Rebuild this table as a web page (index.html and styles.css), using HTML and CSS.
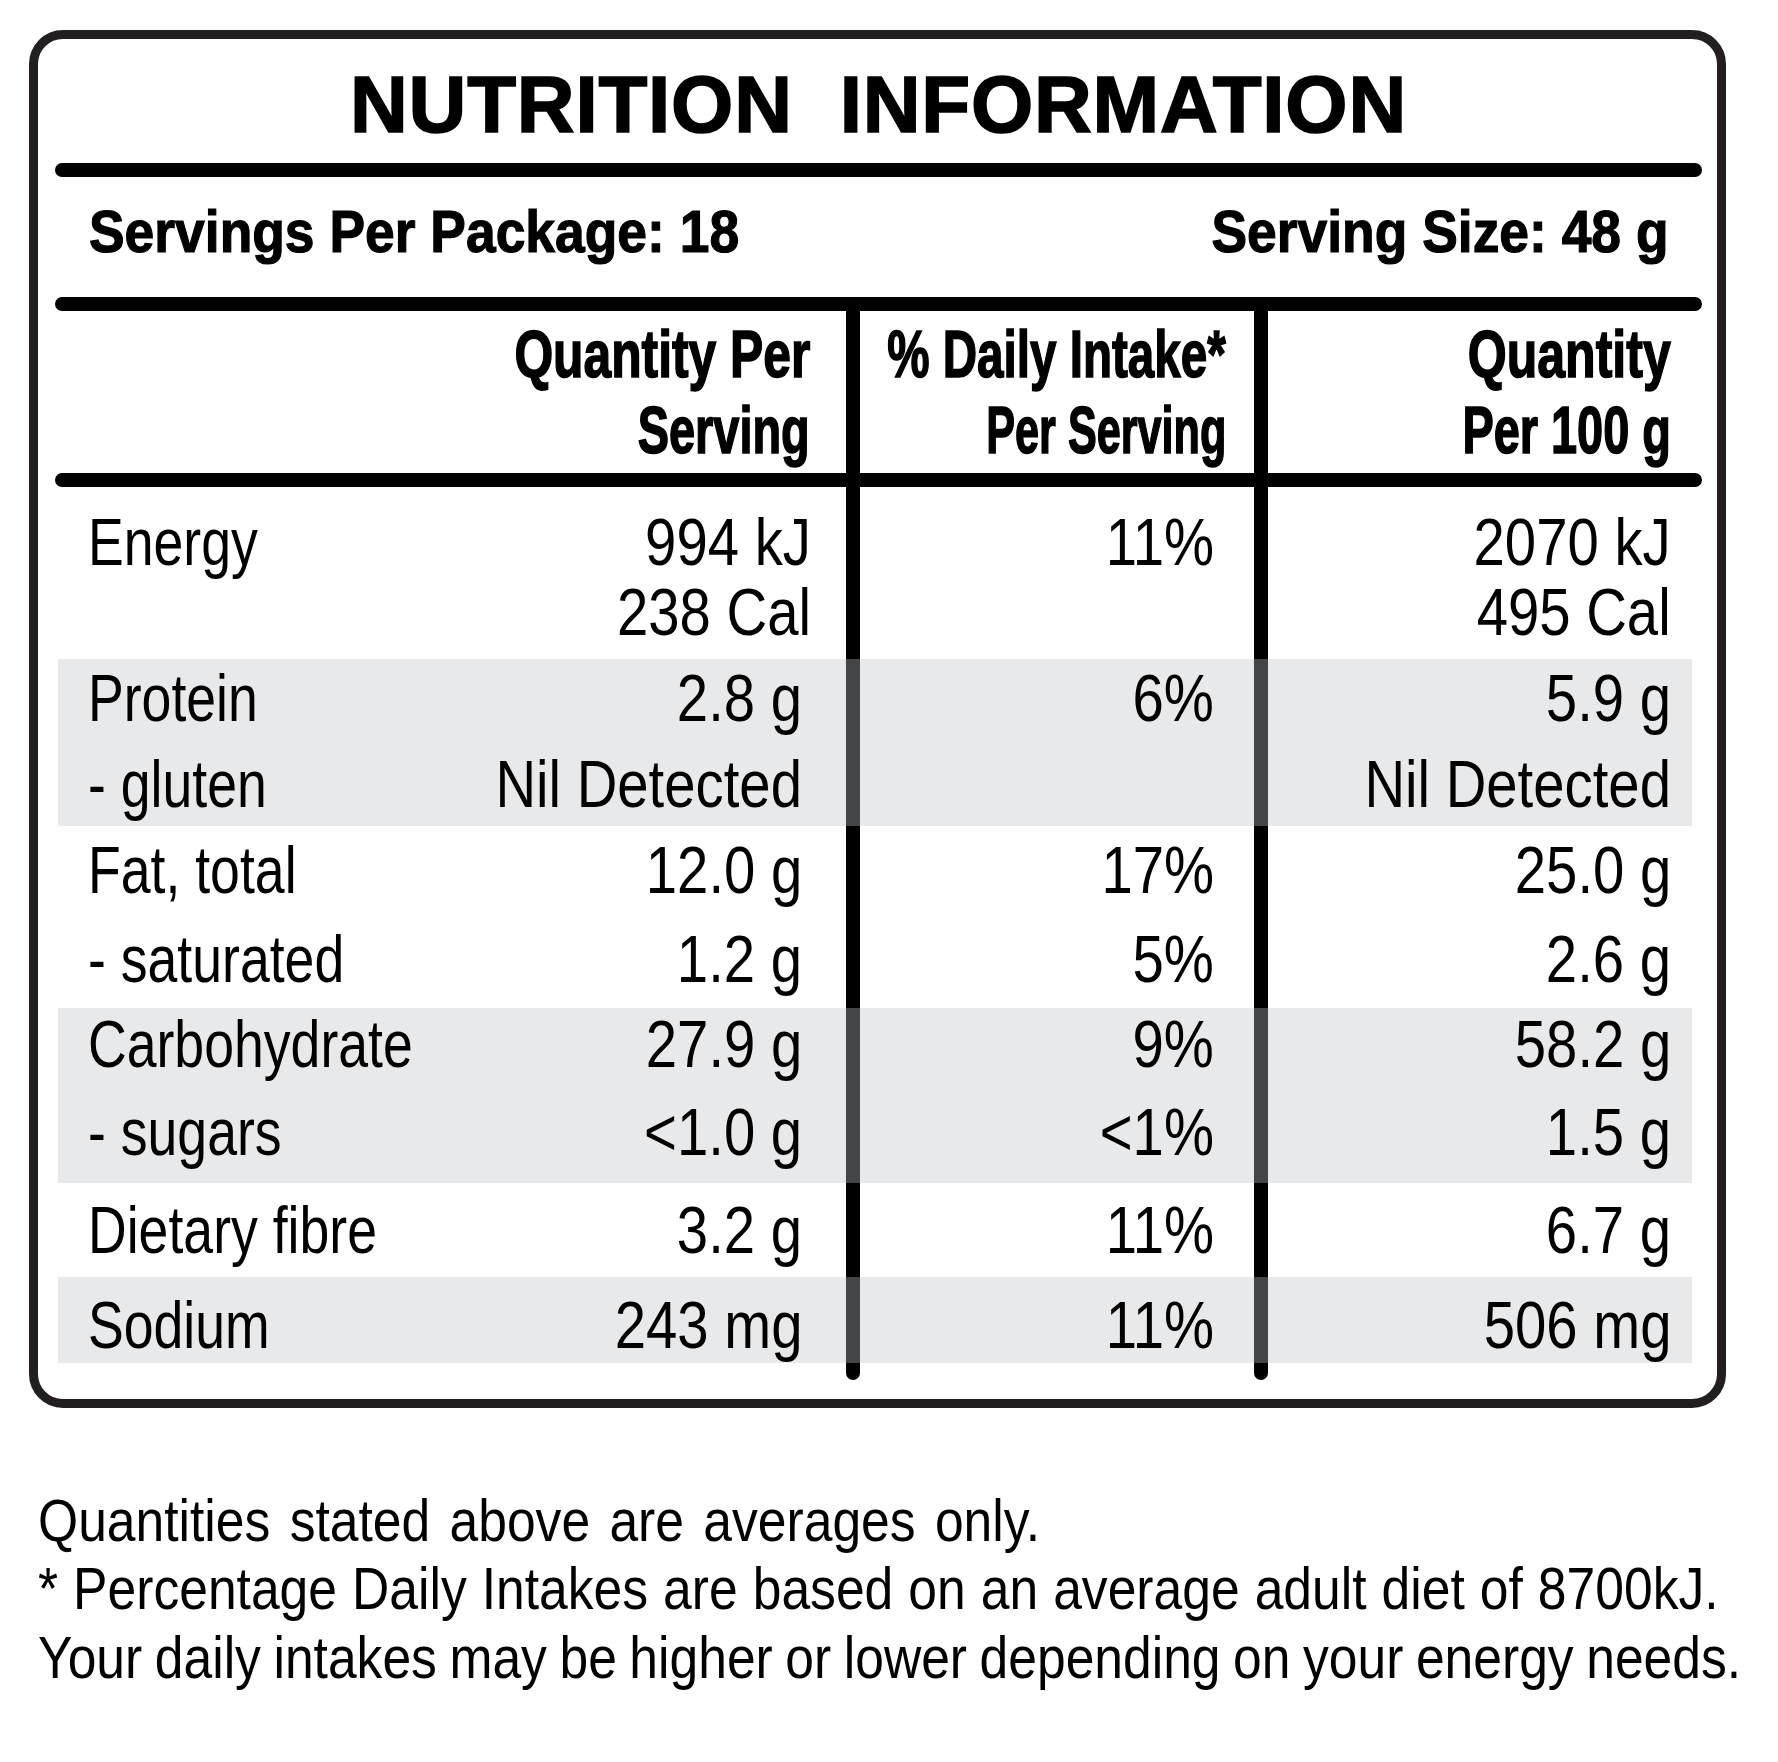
FILE: index.html
```html
<!DOCTYPE html>
<html lang="en">
<head>
<meta charset="utf-8">
<title>Nutrition Information</title>
<link rel="stylesheet" href="styles.css">
</head>
<body>
<div class="label">
  <h1 class="title">NUTRITION INFORMATION</h1>
  <div class="rule rule-top"></div>
  <div class="servings">
    <span class="sx">Servings Per Package: 18</span>
    <span class="sx r">Serving Size: 48 g</span>
  </div>
  <div class="rule"></div>
  <div class="grid">
    <div class="divider dv1"></div>
    <div class="divider dv2"></div>
    <div class="rule rule3"></div>
    <div class="band band1"></div>
    <div class="band band2"></div>
    <div class="band band3"></div>

    <div class="hd hd1"><span class="hl k74">Quantity Per</span><span class="hl k70">Serving</span></div>
    <div class="hd hd2"><span class="hl k71">% Daily Intake*</span><span class="hl k645">Per Serving</span></div>
    <div class="hd hd3"><span class="hl k75">Quantity</span><span class="hl k70">Per 100 g</span></div>

    <div class="cell lab r3"><span class="nm">Energy</span><span class="v ve">994 kJ<br>238 Cal</span></div>
    <div class="cell pct r3"><span class="v">11%</span></div>
    <div class="cell per r3"><span class="v">2070 kJ<br>495 Cal</span></div>

    <div class="cell lab r4"><span class="nm">Protein</span><span class="v">2.8 g</span></div>
    <div class="cell pct r4"><span class="v">6%</span></div>
    <div class="cell per r4"><span class="v">5.9 g</span></div>

    <div class="cell lab r5"><span class="nm">- gluten</span><span class="v">Nil Detected</span></div>
    <div class="cell per r5"><span class="v">Nil Detected</span></div>

    <div class="cell lab r6"><span class="nm">Fat, total</span><span class="v">12.0 g</span></div>
    <div class="cell pct r6"><span class="v">17%</span></div>
    <div class="cell per r6"><span class="v">25.0 g</span></div>

    <div class="cell lab r7"><span class="nm">- saturated</span><span class="v">1.2 g</span></div>
    <div class="cell pct r7"><span class="v">5%</span></div>
    <div class="cell per r7"><span class="v">2.6 g</span></div>

    <div class="cell lab r8"><span class="nm">Carbohydrate</span><span class="v">27.9 g</span></div>
    <div class="cell pct r8"><span class="v">9%</span></div>
    <div class="cell per r8"><span class="v">58.2 g</span></div>

    <div class="cell lab r9"><span class="nm">- sugars</span><span class="v">&lt;1.0 g</span></div>
    <div class="cell pct r9"><span class="v">&lt;1%</span></div>
    <div class="cell per r9"><span class="v">1.5 g</span></div>

    <div class="cell lab r10"><span class="nm">Dietary fibre</span><span class="v">3.2 g</span></div>
    <div class="cell pct r10"><span class="v">11%</span></div>
    <div class="cell per r10"><span class="v">6.7 g</span></div>

    <div class="cell lab r11"><span class="nm">Sodium</span><span class="v">243 mg</span></div>
    <div class="cell pct r11"><span class="v">11%</span></div>
    <div class="cell per r11"><span class="v">506 mg</span></div>
  </div>
</div>
<div class="notes">
  <p class="line n1">Quantities stated above are averages only.</p>
  <p class="line n2">* Percentage Daily Intakes are based on an average adult diet of 8700kJ.</p>
  <p class="line n3">Your daily intakes may be higher or lower depending on your energy needs.</p>
</div>
</body>
</html>
```

FILE: styles.css
```css
* {
  box-sizing: border-box;
  margin: 0;
  padding: 0;
}

html,
body {
  background: #fff;
}

body {
  font-family: "Liberation Sans", Arial, sans-serif;
  color: #000;
  padding-bottom: 40px;
}

.label {
  margin: 30px 0 0 29px;
  width: 1697px;
  border: 9px solid #231f20;
  border-radius: 34px;
  padding: 0 15px 0 17px;
}

.title {
  font-size: 80px;
  font-weight: 700;
  line-height: 100px;
  padding-top: 16px;
  text-align: center;
  word-spacing: 24px;
  letter-spacing: 0.8px;
  white-space: nowrap;
  -webkit-text-stroke: 1.6px #000;
}

.rule {
  height: 14px;
  background: #000;
  border-radius: 7px;
}

.rule-top {
  margin-top: 8px;
}

.servings {
  display: flex;
  justify-content: space-between;
  padding: 20px 33px 30px 34px;
  font-size: 60px;
  font-weight: 700;
  line-height: 70px;
}

.sx {
  display: inline-block;
  white-space: nowrap;
  transform: scaleX(0.89);
  transform-origin: left center;
  -webkit-text-stroke: 1.2px #000;
}

.sx.r {
  transform-origin: right center;
}

.grid {
  display: grid;
  grid-template-columns: 791px 14px 394px 14px 434px;
  grid-template-rows: 162px 14px 172px 83px 84px 86px 96px 88px 87px 94px 86px 36px;
}

.divider {
  grid-row: 1 / -1;
  background: #000;
  margin-bottom: 19px;
  border-radius: 0 0 7px 7px;
}

.dv1 { grid-column: 2; }
.dv2 { grid-column: 4; }

.rule3 {
  grid-row: 2;
  grid-column: 1 / -1;
}

.band {
  grid-column: 1 / -1;
  margin: 0 10px 0 3px;
  background: rgba(190, 193, 199, 0.357);
}

.band1 { grid-row: 4 / 6; }
.band2 { grid-row: 8 / 10; }
.band3 { grid-row: 11; }

.hd {
  grid-row: 1;
  display: flex;
  flex-direction: column;
  align-items: flex-end;
  font-size: 67px;
  font-weight: 700;
  line-height: 76px;
  padding-top: 5px;
  white-space: nowrap;
}

.hd1 { grid-column: 1; padding-right: 36px; }
.hd2 { grid-column: 3; padding-right: 28px; }
.hd3 { grid-column: 5; padding-right: 31px; }

.hl {
  display: block;
  transform-origin: right top;
  -webkit-text-stroke: 1.6px #000;
}

.k645 { transform: scaleX(0.645); }
.k70 { transform: scaleX(0.7); }
.k71 { transform: scaleX(0.71); }
.k74 { transform: scaleX(0.743); }
.k75 { transform: scaleX(0.747); }

.cell {
  font-size: 67px;
  line-height: 70px;
  white-space: nowrap;
}

.lab {
  grid-column: 1;
  display: flex;
  justify-content: space-between;
  align-items: flex-start;
  padding-left: 33px;
  padding-right: 44px;
}

.pct,
.per {
  display: flex;
  justify-content: flex-end;
  align-items: flex-start;
}

.pct {
  grid-column: 3;
  padding-right: 40px;
}

.per {
  grid-column: 5;
  padding-right: 31px;
}

.nm {
  display: inline-block;
  transform: scaleX(0.8);
  transform-origin: left top;
}

.v {
  display: inline-block;
  text-align: right;
  transform: scaleX(0.84);
  transform-origin: right top;
}

.lab .ve {
  margin-right: -9px;
}

.r3 { grid-row: 3; padding-top: 20px; }
.r4 { grid-row: 4; padding-top: 4px; }
.r5 { grid-row: 5; padding-top: 7px; }
.r6 { grid-row: 6; padding-top: 9px; }
.r7 { grid-row: 7; padding-top: 12px; }
.r8 { grid-row: 8; padding-top: 1px; }
.r9 { grid-row: 9; padding-top: 1px; }
.r10 { grid-row: 10; padding-top: 12px; }
.r11 { grid-row: 11; padding-top: 13px; }

.notes {
  margin: 78px 0 0 38px;
  font-size: 51.6px;
  line-height: 58.9px;
  transform: scaleY(1.1628);
  transform-origin: left top;
}

.line {
  white-space: nowrap;
}

.n1 { word-spacing: 5px; }
.n2 { word-spacing: 0.7px; }
.n3 { word-spacing: -1.8px; }
```
